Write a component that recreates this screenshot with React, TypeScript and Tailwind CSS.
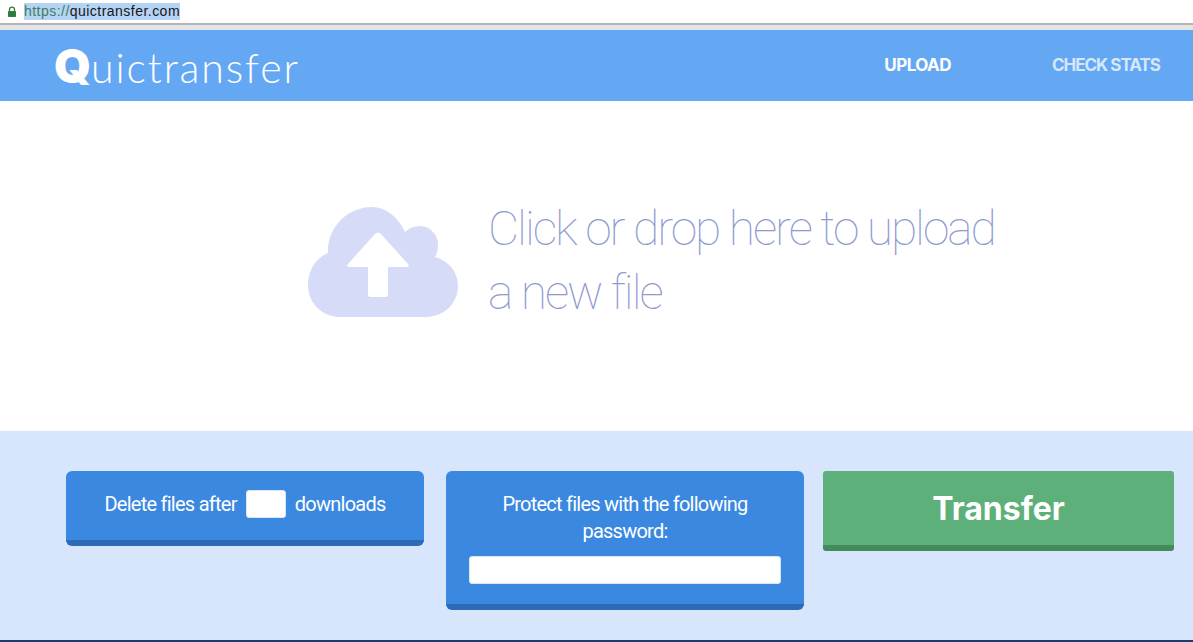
export default function App() {
  return (
    <div className="h-[642px] w-[1193px] overflow-hidden flex flex-col bg-white font-['Roboto',sans-serif]">
      {/* browser address bar */}
      <div className="h-[30px] shrink-0 bg-white border-b-[5px] border-[#e4e4e6] shadow-[inset_0_-2px_0_#b4b4b8]">
        <div className="flex items-start h-[24px] pl-[7px]">
          <svg width="10" height="12" viewBox="0 0 10 12" className="mt-[6px]">
            <path d="M2.5 5V3.6a2.5 2.5 0 0 1 5 0V5" fill="none" stroke="#2f7d3c" strokeWidth="1.3" />
            <rect x="1" y="5" width="8" height="6" rx="0.7" fill="#2f7d3c" />
          </svg>
          <div className="ml-[7px] mt-[3px] h-[17px] bg-[#b5d3f3] text-[14px] leading-[17px] font-['Liberation_Sans',sans-serif] text-[#15161a] tracking-[0.47px]">
            <span className="text-[#3a7f63]">https://</span>quictransfer.com
          </div>
        </div>
      </div>

      {/* site header */}
      <header className="h-[71px] shrink-0 bg-[#64a8f4] flex items-center pl-[54px] pr-[33px] text-white">
        <div className="flex items-baseline text-[41px] leading-none tracking-[1.9px] -mt-[1px] font-['Lato',sans-serif]">
          <span className="font-black text-[47px] tracking-[0px] font-['Inter',sans-serif]">Q</span>
          <span className="font-light">uictransfer</span>
        </div>
        <nav className="ml-auto flex items-center gap-[101px] text-[17px] font-bold font-['Inter',sans-serif]">
          <a className="text-white tracking-[-0.55px]">UPLOAD</a>
          <a className="text-[#d5e7fb] tracking-[-1px]">CHECK STATS</a>
        </nav>
      </header>

      {/* drop zone */}
      <main className="h-[330px] shrink-0 bg-white flex items-start pl-[308px] pt-[96px]">
        <svg width="150" height="110" viewBox="0 0 150 110" className="mt-[10px] shrink-0">
          <path
            fill="#d6dcf7"
            d="M32 110C14 110 0 96 0 78 0 63 8 51 20 46 19 20 40 0 64 0 78 0 90 10 97 25 101 21 106 19 112 19 122 19 130 28 130 37 130 42 129 47 127 50 141 54 150 65 150 79 150 96 136 110 118 110z"
          />
          <path
            fill="#ffffff"
            d="M62 90c-1 0-2-1-2-2V60H41c-2 0-2-2-1-3L67 27c2-2 4-2 6 0l27 30c1 1 1 3-1 3H80v28c0 1-1 2-2 2z"
          />
        </svg>
        <p className="ml-[30px] text-[48px] leading-[64px] font-thin tracking-[-2.05px] text-[#8f9bcf]">
          Click or drop here to upload
          <br />a new file
        </p>
      </main>

      {/* options */}
      <section className="flex-1 bg-[#d8e6fd] border-b-2 border-[#1f3a6e] flex items-start pt-[40px] pl-[66px] text-white">
        <div className="w-[358px] h-[75px] rounded-[6px] bg-[#3b88e0] border-b-[6px] border-[#2a6bb8] flex items-start justify-center pt-[20px] text-[20px] leading-[26px] tracking-[-0.74px]">
          <span>Delete files after</span>
          <input className="w-[40px] h-[28px] mx-[9px] -mt-[1px] rounded-[3px] bg-white border border-[#dbe6f5]" />
          <span>downloads</span>
        </div>
        <div className="ml-[22px] w-[358px] h-[139px] rounded-[6px] bg-[#3b88e0] border-b-[6px] border-[#2a6bb8] flex flex-col items-center pt-[20px] text-[20px] leading-[27px] tracking-[-0.76px] text-center">
          <p className="w-[300px]">Protect files with the following password:</p>
          <input className="w-[312px] h-[28px] mt-[11px] rounded-[3px] bg-white border border-[#dbe6f5]" />
        </div>
        <button className="ml-[19px] w-[351px] h-[80px] rounded-[3px] bg-[#5db079] border-b-[6px] border-[#458a5b] flex items-start justify-center pt-[16px] text-[32px] leading-[44px] font-bold font-['Inter',sans-serif]">
          Transfer
        </button>
      </section>
    </div>
  )
}
